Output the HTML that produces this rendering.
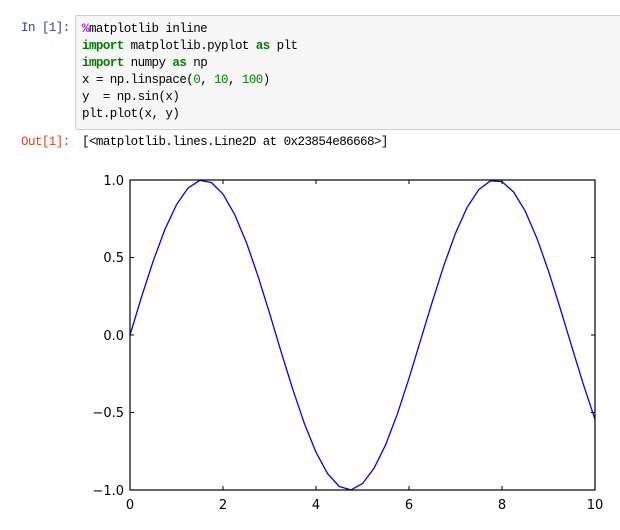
<!DOCTYPE html>
<html><head><style>
body{margin:0;width:620px;height:530px;background:#fff;position:relative;overflow:hidden}
.mono{font-family:"Liberation Mono","DejaVu Sans Mono",monospace;font-size:12.5px;letter-spacing:-0.55px}
.p{position:absolute;white-space:pre}
.box{position:absolute;left:75px;top:15px;width:560px;height:113px;background:#f7f7f7;border:1px solid #cfcfcf;border-radius:2px}
.k{color:#008000;font-weight:bold}.n{color:#008000}.m{color:#aa22ff;font-weight:bold}
</style></head><body>
<div class="p mono" style="left:21px;top:21px;color:#303f9f">In [1]:</div>
<div class="box"></div>
<div class="p mono" style="left:82px;top:21px;line-height:17px;color:#000"><span class="m">%</span>matplotlib inline
<span class="k">import</span> matplotlib.pyplot <span class="k">as</span> plt
<span class="k">import</span> numpy <span class="k">as</span> np
x = np.linspace(<span class="n">0</span>, <span class="n">10</span>, <span class="n">100</span>)
y  = np.sin(x)
plt.plot(x, y)</div>
<div class="p mono" style="left:21px;top:135px;color:#d84315">Out[1]:</div>
<div class="p mono" style="left:82px;top:135px;color:#000">[&lt;matplotlib.lines.Line2D at 0x23854e86668&gt;]</div>
<svg width="620" height="530" style="position:absolute;left:0;top:0" font-family="DejaVu Sans, Liberation Sans, sans-serif" font-size="13">
<g stroke="#000" stroke-width="1">
<line x1="130" y1="490" x2="130" y2="486"/><line x1="223" y1="490" x2="223" y2="486"/><line x1="316" y1="490" x2="316" y2="486"/><line x1="409" y1="490" x2="409" y2="486"/><line x1="502" y1="490" x2="502" y2="486"/>
<line x1="223" y1="180" x2="223" y2="184"/><line x1="316" y1="180" x2="316" y2="184"/><line x1="409" y1="180" x2="409" y2="184"/><line x1="502" y1="180" x2="502" y2="184"/>
<line x1="130" y1="257.5" x2="134" y2="257.5"/><line x1="130" y1="335" x2="134" y2="335"/><line x1="130" y1="412.5" x2="134" y2="412.5"/>
<line x1="595" y1="257.5" x2="591" y2="257.5"/><line x1="595" y1="335" x2="591" y2="335"/><line x1="595" y1="412.5" x2="591" y2="412.5"/>
</g>
<polyline fill="none" stroke="#0000ff" stroke-width="1.3" stroke-linejoin="round" points="130,335 141.6,296.7 153.3,260.7 164.9,229.4 176.5,204.6 188.1,187.9 199.8,180.4 211.4,182.5 223,194.1 234.6,214.4 246.3,242.2 257.9,275.8 269.5,313.1 281.1,351.8 292.8,389.4 304.4,423.6 316,452.3 327.6,473.7 339.3,486.5 350.9,489.9 362.5,483.6 374.1,468.1 385.8,444.4 397.4,413.8 409,378.3 420.6,340.1 432.3,301.7 443.9,265.3 455.5,233.2 467.1,207.4 478.8,189.6 490.4,180.8 502,181.6 513.6,192 525.3,211.2 536.9,238.2 548.5,271.1 560.1,308 571.8,346.7 583.4,384.6 595,419.3"/>
<rect x="130" y="180" width="465" height="310" fill="none" stroke="#000" stroke-width="1.2"/>
<g text-anchor="middle" fill="#000">
<text x="130" y="509">0</text><text x="223" y="509">2</text><text x="316" y="509">4</text><text x="409" y="509">6</text><text x="502" y="509">8</text><text x="595" y="509">10</text>
</g>
<g text-anchor="end" fill="#000">
<text x="124" y="185">1.0</text><text x="124" y="262">0.5</text><text x="124" y="340">0.0</text><text x="124" y="417">−0.5</text><text x="124" y="495">−1.0</text>
</g>
</svg>
</body></html>
